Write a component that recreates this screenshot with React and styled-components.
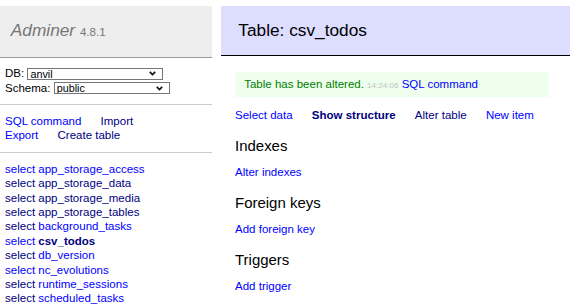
import React from "react";
import styled, { createGlobalStyle } from "styled-components";

const Global = createGlobalStyle`
  html, body { margin: 0; padding: 0; background: #fff; overflow: hidden; }
  body {
    font-family: "Liberation Sans", Arial, Helvetica, sans-serif;
    font-size: 11.52px;
    line-height: 14.4px;
    color: #000;
  }
`;

const Page = styled.div`
  display: flex;
  align-items: flex-start;
  padding-top: 6px;
  width: 570px;
  height: 301px;
  overflow: hidden;
`;

const Sidebar = styled.nav`
  width: 212px;
  flex: none;
`;

const Logo = styled.h1`
  margin: 0;
  padding: 13.5px 0 13.5px 10.8px;
  font-size: 17.28px;
  line-height: 21.6px;
  font-weight: normal;
  font-style: italic;
  background: #eee;
  border-bottom: 1px solid #999;
  color: #777;
`;

const Version = styled.span`
  font-style: normal;
  font-size: 11.58px;
  color: #777;
`;

const Section = styled.div`
  padding: ${(p) => p.$pad};
  border-bottom: ${(p) => (p.$last ? "none" : "1px solid #ccc")};
`;

const FieldRow = styled.div`
  display: flex;
  align-items: flex-end;
  height: 14.5px;
  gap: 3.2px;
  line-height: 14.4px;
`;

const SelectWrap = styled.span`
  position: relative;
  display: inline-flex;
  width: ${(p) => p.$w}px;
  height: 12px;
  box-sizing: border-box;
  border: 1px solid #767676;
  background: #fff;
  margin-bottom: 1px;
`;

const NativeSelect = styled.select`
  appearance: none;
  -webkit-appearance: none;
  border: 0;
  outline: none;
  background: transparent;
  width: 100%;
  height: 100%;
  padding: 0 0 0 2px;
  margin: 0;
  font-family: "Liberation Sans", Arial, sans-serif;
  font-size: 10.8px;
  line-height: 10px;
  color: #000;
`;

const Chevron = styled.svg`
  position: absolute;
  right: 6px;
  top: 2.5px;
  width: 7px;
  height: 5px;
  pointer-events: none;
`;

const LinkRow = styled.div`
  display: flex;
  gap: 19.2px;
  height: 14.4px;
`;

const Link = styled.a`
  color: ${(p) => (p.$visited ? "#000080" : "#0000ff")};
  font-weight: ${(p) => (p.$bold ? "bold" : "normal")};
  text-decoration: none;
  white-space: nowrap;
  cursor: pointer;
`;

const TableList = styled.ul`
  list-style: none;
  margin: 0;
  padding: 0;
`;

const TableItem = styled.li`
  height: 14.4px;
  white-space: nowrap;
`;

const Content = styled.main`
  flex: 1;
  margin-left: 9px;
`;

const Title = styled.h2`
  margin: 0;
  padding: 13.5px 17.3px;
  font-size: 17.28px;
  line-height: 21.6px;
  font-weight: normal;
  color: #000;
  background: #ddf;
  border-bottom: 1px solid #000;
`;

const Body = styled.div`
  padding-left: 14px;
`;

const Message = styled.div`
  margin: 16px 21px 0 0;
  padding: 5.5px 9.2px;
  height: 14.4px;
  background: #efe;
  color: green;
  line-height: 14.4px;
`;

const Time = styled.span`
  color: silver;
  font-size: 8.06px;
  line-height: 1;
`;

const Links = styled.p`
  display: flex;
  gap: 19.2px;
  margin: 11.3px 0 0;
`;

const SectionHeading = styled.h3`
  margin: 14.7px 0 0;
  font-size: 14.98px;
  line-height: 18.72px;
  font-weight: normal;
  color: #000;
`;

const Para = styled.p`
  margin: 9px 0 0;
`;

function Select({ width, value }) {
  return (
    <SelectWrap $w={width}>
      <NativeSelect defaultValue={value}>
        <option value={value}>{value}</option>
      </NativeSelect>
      <Chevron viewBox="0 0 7 5">
        <path d="M0.8 0.9 L3.5 3.6 L6.2 0.9" fill="none" stroke="#111" strokeWidth="1.7" />
      </Chevron>
    </SelectWrap>
  );
}

const tables = [
  ["app_storage_access", false, false],
  ["app_storage_data", true, true],
  ["app_storage_media", true, true],
  ["app_storage_tables", true, true],
  ["background_tasks", true, false],
  ["csv_todos", false, true, true],
  ["db_version", true, false],
  ["nc_evolutions", false, false],
  ["runtime_sessions", true, false],
  ["scheduled_tasks", true, false],
];

export default function App() {
  return (
    <>
      <Global />
      <Page>
        <Sidebar>
          <Logo>
            Adminer <Version>4.8.1</Version>
          </Logo>
          <Section $pad="8.5px 0 8.5px 5px">
            <FieldRow>
              <span>DB:</span>
              <Select width={136} value="anvil" />
            </FieldRow>
            <FieldRow>
              <span>Schema:</span>
              <Select width={116} value="public" />
            </FieldRow>
          </Section>
          <Section $pad="9.5px 0 9px 5px">
            <LinkRow>
              <Link>SQL command</Link>
              <Link $visited>Import</Link>
            </LinkRow>
            <LinkRow>
              <Link>Export</Link>
              <Link $visited>Create table</Link>
            </LinkRow>
          </Section>
          <Section $pad="9px 0 0 5px" $last>
            <TableList>
              {tables.map(([name, selVisited, nameVisited, active]) => (
                <TableItem key={name}>
                  <Link $visited={selVisited}>select</Link>{" "}
                  <Link $visited={nameVisited} $bold={active}>
                    {name}
                  </Link>
                </TableItem>
              ))}
            </TableList>
          </Section>
        </Sidebar>
        <Content>
          <Title>Table: csv_todos</Title>
          <Body>
            <Message>
              Table has been altered. <Time>14:24:06</Time> <Link>SQL command</Link>
            </Message>
            <Links>
              <Link>Select data</Link>
              <Link $visited $bold>Show structure</Link>
              <Link $visited>Alter table</Link>
              <Link>New item</Link>
            </Links>
            <SectionHeading>Indexes</SectionHeading>
            <Para>
              <Link>Alter indexes</Link>
            </Para>
            <SectionHeading>Foreign keys</SectionHeading>
            <Para>
              <Link>Add foreign key</Link>
            </Para>
            <SectionHeading>Triggers</SectionHeading>
            <Para>
              <Link>Add trigger</Link>
            </Para>
          </Body>
        </Content>
      </Page>
    </>
  );
}
